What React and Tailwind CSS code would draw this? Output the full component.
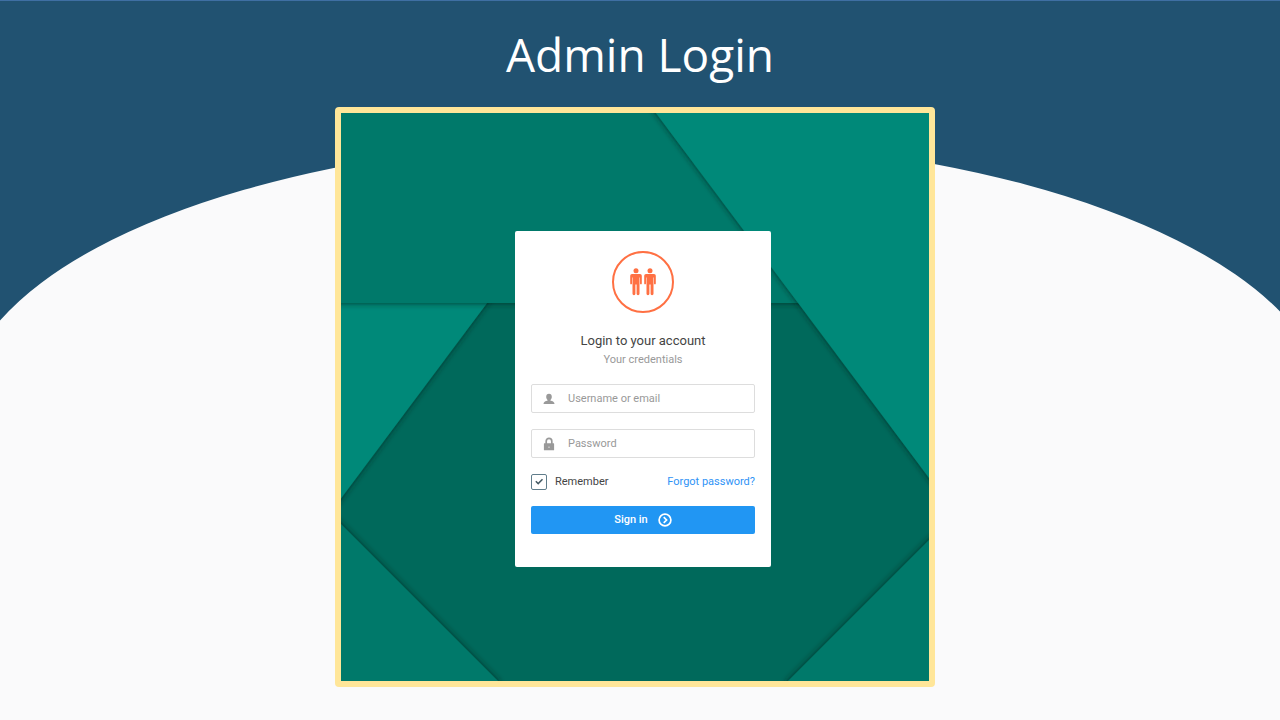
import { useState } from "react";

const Backdrop = () => (
  <svg className="absolute inset-0 -z-10 h-full w-full" viewBox="0 0 1280 720" preserveAspectRatio="none" aria-hidden="true">
    <path d="M0 320A682 272 0 0 1 1280 311V720H0Z" fill="#fafafb" />
  </svg>
);

// layered paper sheets, each one drops a soft shadow on the sheets below
const PaperSheets = () => (
  <svg className="absolute inset-0 h-full w-full" viewBox="0 0 588 568" preserveAspectRatio="none" aria-hidden="true">
    <defs>
      <filter id="sheet" x="-20%" y="-20%" width="140%" height="140%">
        <feDropShadow dx="0" dy="0" stdDeviation="3" floodColor="#00251f" floodOpacity="0.85" />
      </filter>
    </defs>
    <rect width="588" height="568" fill="#00695b" />
    <path d="M-40 371L158 569L138 620H-40Z" fill="#00796a" filter="url(#sheet)" />
    <path d="M446 569L628 387V620H446Z" fill="#00796a" filter="url(#sheet)" />
    <path d="M-40 150H176L-40 439Z" fill="#008979" filter="url(#sheet)" />
    <path d="M-40 -40H500V190H-40Z" fill="#00796a" filter="url(#sheet)" />
    <path d="M285 -40L618 405V-40Z" fill="#008979" filter="url(#sheet)" />
  </svg>
);

const Person = ({ x }) => (
  <g transform={`translate(${x} 0)`}>
    <circle cx="6" cy="2.8" r="2.500" />
    <path d="M2 6h8a1.800 1.800 0 0 1 1.800 1.800v7.600a.9.9 0 0 1-1.800 0V9.500h-.5v16.300a1.300 1.300 0 0 1-2.900 0V16.500h-1.200v9.300a1.300 1.300 0 0 1-2.900 0V9.500H2v5.900a.9.9 0 0 1-1.800 0V7.800A1.800 1.800 0 0 1 2 6Z" />
  </g>
);

const PeopleIcon = () => (
  <svg className="h-7 w-7" viewBox="0 0 28 28" fill="currentColor" aria-hidden="true">
    <Person x={1} />
    <Person x={15} />
  </svg>
);

const UserIcon = () => (
  <svg className="h-3 w-3" viewBox="0 0 12 12" fill="currentColor" aria-hidden="true">
    <path d="M6 .8C4.200.8 3.200 2 3.200 3.800c0 1.300.5 2.500 1.300 3.100v.8C2.200 8 .5 9 .5 11h11c0-2-1.700-3-4-3.300v-.8c.8-.6 1.300-1.800 1.300-3.100C8.800 2 7.800.8 6 .8Z" />
  </svg>
);

const LockIcon = () => (
  <svg className="h-3.5 w-3" viewBox="0 0 12 14" aria-hidden="true">
    <path d="M3.200 7V4.200a2.800 2.800 0 0 1 5.600 0V7" fill="none" stroke="currentColor" strokeWidth="1.700" />
    <path d="M1.300 6.300h9.400a.4.4 0 0 1 .4.4v6.200a.4.4 0 0 1-.4.4H1.300a.4.4 0 0 1-.4-.4V6.700a.4.4 0 0 1 .4-.4Z" fill="currentColor" />
    <path d="M5.500 9.500h1v1.500h-1z" fill="#fff" opacity=".7" />
  </svg>
);

const ArrowIcon = () => (
  <svg className="h-3.5 w-3.5" viewBox="0 0 14 14" fill="none" stroke="currentColor" strokeWidth="1.700" aria-hidden="true">
    <circle cx="7" cy="7" r="5.900" />
    <path d="M5.700 4.100L8.600 7L5.700 9.900" />
  </svg>
);

const Field = ({ id, label, type, icon, value, onChange }) => (
  <div className="relative">
    <label htmlFor={id} className="absolute inset-y-0 left-0 flex w-9 items-center justify-center text-[#999]" aria-label={label}>
      {icon}
    </label>
    <input
      id={id}
      type={type}
      placeholder={label}
      aria-label={label}
      value={value}
      onChange={(e) => onChange(e.target.value)}
      className="block h-[29px] w-full rounded-xs border border-[#ddd] bg-white pr-3 pl-9 text-[11px] leading-5 text-[#444] outline-none placeholder:text-[#999] focus:border-[#2196f3]"
    />
  </div>
);

const LoginCard = () => {
  const [username, setUsername] = useState("");
  const [password, setPassword] = useState("");
  const [remember, setRemember] = useState(true);

  return (
    <form
      onSubmit={(e) => e.preventDefault()}
      className="relative flex w-64 flex-col rounded-xs bg-white px-4 pt-5 pb-[33px] font-[Roboto,sans-serif] text-[11px] leading-4 text-[#444]"
    >
      <div className="flex h-[62px] w-[62px] items-center justify-center self-center rounded-full border-2 border-[#ff7043] text-[#ff7043]">
        <PeopleIcon />
      </div>
      <h2 className="mt-[17px] text-center text-[13px] leading-[22px]">Login to your account</h2>
      <p className="text-center text-[#999]">Your credentials</p>

      <div className="mt-4 flex flex-col gap-4">
        <Field id="username" label="Username or email" type="text" icon={<UserIcon />} value={username} onChange={setUsername} />
        <Field id="password" label="Password" type="password" icon={<LockIcon />} value={password} onChange={setPassword} />
      </div>

      <div className="mt-4 flex items-center justify-between">
        <label htmlFor="remember" className="flex items-center gap-2">
          <span className="relative flex">
            <input
              id="remember"
              type="checkbox"
              checked={remember}
              onChange={(e) => setRemember(e.target.checked)}
              className="h-4 w-4 appearance-none rounded-xs border border-[#607d8b] bg-white"
            />
            {remember && (
              <svg className="pointer-events-none absolute inset-0 h-4 w-4" viewBox="0 0 16 16" fill="none" stroke="#455a64" strokeWidth="1.500" aria-hidden="true">
                <path d="M4.800 7.300L7.200 9.600L11.500 5.300" />
              </svg>
            )}
          </span>
          Remember
        </label>
        <a href="#forgot" className="text-[#2f93f6]">Forgot password?</a>
      </div>

      <button type="submit" className="mt-4 flex h-7 w-full items-center justify-center gap-2.5 rounded-xs bg-[#2196f3] font-medium text-white">
        Sign in
        <ArrowIcon />
      </button>
    </form>
  );
};

export default function App() {
  return (
    <main className="relative isolate flex min-h-screen flex-col items-center border-t border-[#3f6fa3] bg-[#215271] pb-8">
      <Backdrop />
      <h1 className="pt-5 font-['Open_Sans',sans-serif] text-[46px] leading-[66px] font-medium text-white">Admin Login</h1>
      <section className="mt-5 mr-2.5 w-full max-w-[600px] rounded-sm bg-[#ffe699] p-1.5">
        <div className="relative flex justify-center overflow-hidden pt-[118px] pb-[114px] pl-4">
          <PaperSheets />
          <LoginCard />
        </div>
      </section>
    </main>
  );
}
